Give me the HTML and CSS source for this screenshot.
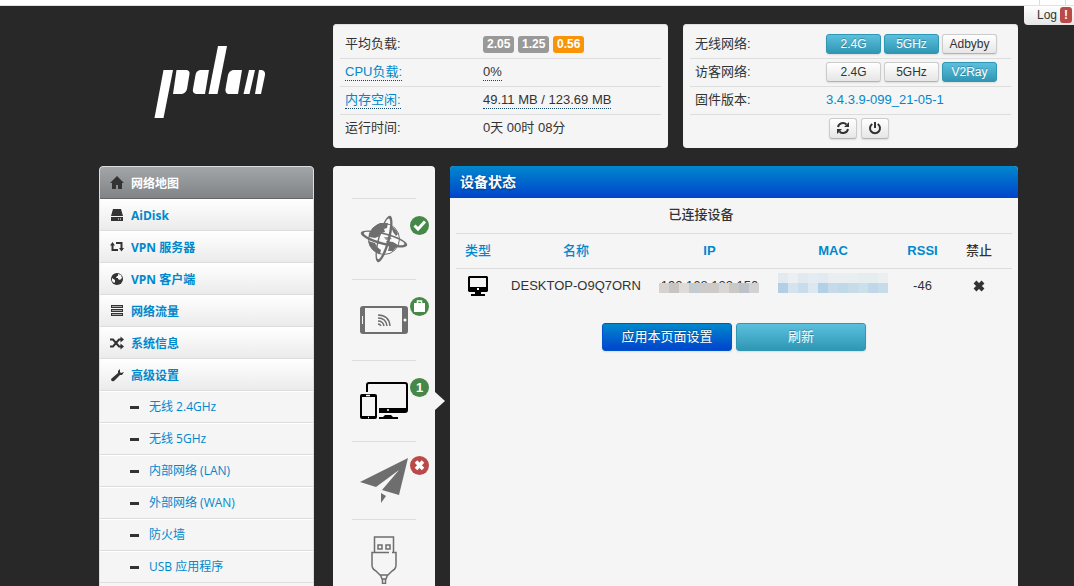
FILE: index.html
```html
<!DOCTYPE html>
<html lang="zh-CN">
<head>
	<meta charset="UTF-8">
	<title>网络地图</title>
	<link rel="stylesheet" href="styles.css">
</head>
<body>
	<div class="topbar"><span></span><span></span></div>
	<a class="log" href="#">Log <span class="log-badge">!</span></a>

	<div class="wrapper">
		<!--头部-->
		<div class="header">
			<a class="logo" href="#" aria-label="Padavan">
				<svg width="112" height="74" viewBox="0 0 112 74" fill="#fff">
					<path d="M9.5 24H19L9.5 72H0.500z"/>
					<path d="M22.500 24H33Q36 25 35.500 28L33 43Q32 47 28 48H19z"/>
					<path d="M46 24H55L51 48H42Q38 47 39 43L41.500 29Q42 25 46 24z"/>
					<path d="M64 0H73L63.500 48H54.500z"/>
					<path d="M79 24H88L84 48H74Q71 47 71.500 43L74 29Q75 25 79 24z"/>
					<path d="M95 24H101L95.500 48H89.500z"/>
					<path d="M105 24H108Q111.500 25 111 29L107 48H101z"/>
				</svg>
			</a>
			<div class="well">
				<table class="info">
					<tr><th>平均负载:</th><td><span class="label">2.05</span> <span class="label">1.25</span> <span class="label label-warning">0.56</span></td></tr>
					<tr><th><a class="dotted" href="#">CPU负载:</a></th><td><span class="dotted">0%</span></td></tr>
					<tr><th><a class="dotted" href="#">内存空闲:</a></th><td><span class="dotted">49.11 MB / 123.69 MB</span></td></tr>
					<tr><th>运行时间:</th><td>0天 00时 08分</td></tr>
				</table>
			</div>
			<div class="well">
				<table class="info info-net">
					<tr><th>无线网络:</th><td><div class="btns"><button class="btn btn-info">2.4G</button><button class="btn btn-info">5GHz</button><button class="btn">Adbyby</button></div></td></tr>
					<tr><th>访客网络:</th><td><div class="btns"><button class="btn">2.4G</button><button class="btn">5GHz</button><button class="btn btn-info">V2Ray</button></div></td></tr>
					<tr><th>固件版本:</th><td><a href="#">3.4.3.9-099_21-05-1</a></td></tr>
					<tr>
						<th></th>
						<td><div class="btns btns-icon">
							<button class="btn" aria-label="刷新"><svg width="14" height="14" viewBox="0 0 14 14"><path d="M2 6a5 5 0 0 1 8.500-2.500M12 8a5 5 0 0 1-8.500 2.500" fill="none" stroke="#333" stroke-width="2"/><path d="M13 1v5H8zM1 13V8h5z" fill="#333"/></svg></button>
							<button class="btn" aria-label="重启"><svg width="14" height="14" viewBox="0 0 14 14"><path d="M4.300 3A5 5 0 1 0 9.700 3M7 1v6" fill="none" stroke="#333" stroke-width="2"/></svg></button>
						</div></td>
					</tr>
				</table>
			</div>
		</div>

		<div class="main">
			<!--左侧菜单-->
			<ul class="menu">
				<li class="active"><a href="#"><svg width="14" height="14" viewBox="0 0 14 14"><path d="M7 0l7 7h-2v6H8V9H6v4H2V7H0z"/></svg>网络地图</a></li>
				<li><a href="#"><svg width="14" height="14" viewBox="0 0 14 14"><path d="M3 1h8l2 7H1zM1 9h12v4H1z"/><path d="M8 11h1M10 11h1" stroke="#fff"/></svg>AiDisk</a></li>
				<li><a href="#"><svg width="14" height="14" viewBox="0 0 14 14"><path d="M2.500 4v6H8M6 3h5.500v5" fill="none" stroke="#333" stroke-width="2"/><path d="M0 5.500L2.500 2 5 5.500zM9 8h5l-2.500 3.500z"/></svg>VPN 服务器</a></li>
				<li><a href="#"><svg width="14" height="14" viewBox="0 0 14 14"><circle cx="7" cy="7" r="6"/><path d="M8 2l3 1 1 3-2 2-2-1 0-1-2 0 1-2 1 0zM2 6l3 2 0 2-1 1-2-2z" fill="#f8f8f8"/></svg>VPN 客户端</a></li>
				<li><a href="#"><svg width="14" height="14" viewBox="0 0 14 14"><path d="M1 1h12v3H1zM1 5h12v3H1zM1 9h12v3H1z"/><path d="M2 2.500h10M2 6.500h10M2 10.500h10" stroke="#aaa"/></svg>网络流量</a></li>
				<li><a href="#"><svg width="14" height="14" viewBox="0 0 14 14"><path d="M0 3.500h3l6 7h2M0 10.500h3l6-7h2" fill="none" stroke="#333" stroke-width="2"/><path d="M10.500 0.500l3.500 3-3.500 3zM10.500 7.500l3.500 3-3.500 3z"/></svg>系统信息</a></li>
				<li><a href="#"><svg width="14" height="14" viewBox="0 0 14 14"><path d="M10 1L8 3v2l-7 6q0 3 3 2l6-6h2l2-3-3 1-1-1z"/></svg>高级设置</a></li>
				<li class="sub"><a href="#">无线 2.4GHz</a></li>
				<li class="sub"><a href="#">无线 5GHz</a></li>
				<li class="sub"><a href="#">内部网络 (LAN)</a></li>
				<li class="sub"><a href="#">外部网络 (WAN)</a></li>
				<li class="sub"><a href="#">防火墙</a></li>
				<li class="sub"><a href="#">USB 应用程序</a></li>
			</ul>

			<!--网络地图图标-->
			<div class="map">
				<a class="map-item" href="#" aria-label="互联网">
					<svg width="48" height="48" viewBox="0 0 48 48">
						<circle cx="24" cy="24" r="15.500" fill="#fafafa" stroke="#6e6e6e"/>
						<path d="M9 20q3-9 11-12l8 0-1 5-3 1 1 3-4 1-1 3-5 2-6-1zM8 26l7 2 2 4 4 3-1 4Q10 36 8 26zM31 11q5 3 7 8l-2 2-3-4zM26 26l7 1 5 3-5 6-5 0 1-4z" fill="#6e6e6e"/>
						<path d="M24 22l6 0 2 2-6 1z" fill="#999"/>
						<g fill="#6e6e6e" fill-rule="evenodd">
							<path transform="rotate(15 24 24)" d="M0 24a24 6 0 1 0 48 0a24 6 0 1 0-48 0M3 23.500a21 4 0 1 0 42 0a21 4 0 1 0-42 0"/>
							<path transform="rotate(-75 24 24)" d="M0 24a24 6 0 1 0 48 0a24 6 0 1 0-48 0M3 23.500a21 4 0 1 0 42 0a21 4 0 1 0-42 0"/>
						</g>
					</svg>
					<span class="badge"><svg width="19" height="19" viewBox="0 0 19 19"><path d="M4.500 9.500l3.500 3.500 7-7.500" fill="none" stroke="#fff" stroke-width="3"/></svg></span>
				</a>
				<a class="map-item" href="#" aria-label="无线">
					<svg width="48" height="48" viewBox="0 0 48 48">
						<rect y="10" width="48" height="28" rx="3" fill="#6e6e6e"/>
						<rect x="5" y="12" width="37" height="24" fill="#f5f5f5"/>
						<path d="M2.500 20v8" stroke="#f5f5f5"/><circle cx="45" cy="24" r="1.500" fill="#fff"/>
						<path d="M18 19q11 0 12 11M18 22q8 0 9 8M18 25q5 0 6 5M18 28q2 0 3 2" fill="none" stroke="#6e6e6e" stroke-width="1.500"/>
					</svg>
					<span class="badge"><svg width="19" height="19" viewBox="0 0 19 19"><path d="M4 6h11v9H4z" fill="#fff"/><path d="M7.500 7V4h4v3" fill="none" stroke="#fff" stroke-width="1.500"/></svg></span>
				</a>
				<a class="map-item current" href="#" aria-label="设备">
					<svg width="48" height="48" viewBox="0 0 48 48">
						<path d="M7 15V8q0-2 2-2h36q2 0 2 2v24" fill="none" stroke="#000" stroke-width="2"/>
						<path d="M19 31h29v2q0 3-3 3H19zM25 38h6l2 2h5v2H19v-2h4z"/>
						<rect y="17" width="17" height="25" rx="2"/><path d="M2 20h13v19H2z" fill="#f5f5f5"/><path d="M6 18.500h4M8 40.500h1M27 33h2" stroke="#fff" stroke-width="1.500"/>
					</svg>
					<span class="badge">1</span>
				</a>
				<a class="map-item map-item-short" href="#" aria-label="打印">
					<svg width="48" height="48" viewBox="0 0 48 48"><path d="M48 0L0 24l16 5L39 12 22 32l17 5zM21 35l5 3-5 7z" fill="#6e6e6e"/></svg>
					<span class="badge badge-important"><svg width="19" height="19" viewBox="0 0 19 19"><path d="M6 5.500l7 7.500M13 5.500L6 13" stroke="#fff" stroke-width="3.500"/></svg></span>
				</a>
				<a class="map-item" href="#" aria-label="USB">
					<svg width="48" height="48" viewBox="0 0 48 48" fill="none" stroke="#6e6e6e" stroke-width="1.500"><path d="M14.500 16.500V1h19v15.500M29 16.500H12V29q0 4 4 6l4 4h8l4-4q4-2 4-6V16.500h-4M18 9h4v4h-4zM26 9h4v4h-4zM20.500 39l1.500 4h4l1.500-4M22.500 43v4.500h3V43"/></svg>
				</a>
			</div>

			<!--设备状态-->
			<div class="panel">
				<h2>设备状态</h2>
				<div class="panel-body">
					<table class="clients">
						<colgroup><col class="c-type"><col class="c-name"><col class="c-ip"><col class="c-mac"><col class="c-rssi"><col class="c-block"></colgroup>
						<thead>
							<tr><th colspan="5">已连接设备</th><th></th></tr>
							<tr><th><a href="#">类型</a></th><th><a href="#">名称</a></th><th class="latin"><a href="#">IP</a></th><th class="latin"><a href="#">MAC</a></th><th class="latin"><a href="#">RSSI</a></th><th>禁止</th></tr>
						</thead>
						<tbody>
							<tr>
								<td><svg width="20" height="20" viewBox="0 0 20 20"><path d="M1 0h18l1 1v14l-1 1h-6v2h4v2H3v-2h4v-2H1l-1-1V1z"/><path d="M2 2h16v9H2z" fill="#f5f5f5"/><path d="M9 13h2" stroke="#fff" stroke-width="2"/></svg></td>
								<td>DESKTOP-O9Q7ORN</td>
								<td><span class="masked">192.168.123.150<i class="mosaic-ip"></i></span></td>
								<td><i class="mosaic-mac"></i></td>
								<td>-46</td>
								<td><svg width="12" height="12" viewBox="0 0 12 12"><path d="M2 2l8 8M10 2l-8 8" stroke="#333" stroke-width="4"/></svg></td>
							</tr>
						</tbody>
					</table>
					<div class="actions">
						<button class="btn btn-primary">应用本页面设置</button>
						<button class="btn btn-info">刷新</button>
					</div>
				</div>
			</div>
		</div>
	</div>
</body>
</html>
```
FILE: styles.css
```css
*{
	box-sizing: border-box;
}
html{
	height: 100%;
}
body{
	margin: 0;
	height: 100%;
	display: flex;
	flex-direction: column;
	overflow: hidden;
	position: relative;
	background: #282828;
	color: #333;
	font: 13px/18px "Liberation Sans", "Noto Sans CJK SC", sans-serif;
}
a{
	color: #08c;
	text-decoration: none;
}
svg{
	display: block;
}
.topbar{
	flex: none;
	height: 6px;
	background: #fff;
	border-bottom: 1px solid #dde3dd;
	display: flex;
	justify-content: flex-end;
	gap: 25px;
	padding-right: 8px;
}
.topbar span{
	width: 1px;
	background: #ddd;
}
.log{
	position: absolute;
	top: 6px;
	right: 0;
	height: 19px;
	padding: 0 2px 0 13px;
	display: flex;
	gap: 3px;
	background: linear-gradient(#fff, #e6e6e6);
	border-radius: 0 0 0 4px;
	color: #333;
	font-size: 12px;
}
.log-badge{
	width: 12px;
	height: 16px;
	margin-top: 1px;
	border-radius: 3px;
	background: #b94a48;
	color: #fff;
	font-weight: bold;
	line-height: 16px;
	text-align: center;
}
.wrapper{
	flex: 1;
	min-height: 0;
	width: 100%;
	max-width: 962px;
	margin: 0 auto;
	padding: 18px 0 0 44px;
	display: flex;
	flex-direction: column;
	gap: 18px;
}
/*头部*/
.header{
	display: grid;
	grid-template-columns: 218px 1fr 1fr;
	gap: 15px;
}
.logo{
	padding: 22px 0 0 54px;
}
.well{
	padding: 6px 7px;
	border-radius: 4px;
	background: #f5f5f5;
	box-shadow: inset 0 1px 1px #ddd;
}
.info{
	width: 100%;
	border-collapse: collapse;
}
.info th,.info td{
	height: 28px;
	padding: 0 5px;
	text-align: left;
	font-weight: normal;
}
.info th{
	width: 138px;
}
.info-net th{
	width: 131px;
}
.info tr + tr{
	border-top: 1px solid #ddd;
}
.label{
	display: inline-block;
	padding: 0 4px;
	border-radius: 3px;
	background: #999;
	color: #fff;
	font-size: 12px;
	font-weight: bold;
	line-height: 17px;
}
.label-warning{
	background: #f89406;
}
.dotted{
	display: inline-block;
	line-height: 16px;
	border-bottom: 1px dotted #146;
}
.btn{
	height: 20px;
	padding: 0;
	border: 1px solid #ccc;
	border-bottom-color: #b3b3b3;
	border-radius: 3px;
	background: linear-gradient(#fff, #e6e6e6);
	box-shadow: 0 1px 2px rgba(0,0,0,0.1);
	color: #333;
	font: inherit;
	font-size: 12px;
	line-height: 18px;
	cursor: pointer;
}
.btn-info{
	border-color: #2f96b4;
	background: linear-gradient(#5bc0de, #2f96b4);
	color: #fff;
	text-shadow: 0 -1px 0 rgba(0,0,0,0.25);
}
.btn-primary{
	border-color: #0055cc;
	background: linear-gradient(#08c, #0044cc);
	color: #fff;
	text-shadow: 0 -1px 0 rgba(0,0,0,0.25);
}
.btns{
	display: flex;
	gap: 3px;
}
.btns .btn{
	width: 55px;
}
.btns-icon{
	gap: 4px;
	padding-left: 3px;
}
.btns-icon .btn{
	width: 28px;
	height: 21px;
	display: flex;
	align-items: center;
	justify-content: center;
}
/*主体*/
.main{
	flex: 1;
	min-height: 0;
	display: grid;
	grid-template-columns: 218px 102px 1fr;
	column-gap: 15px;
}
.menu{
	margin: 0 4px 0 -1px;
	padding: 0;
	list-style: none;
	overflow: hidden;
	border: 1px solid #ddd;
	border-radius: 4px 4px 0 0;
	background: #f5f5f5;
	font-family: "Open Sans", "Noto Sans CJK SC", sans-serif;
	font-size: 12px;
	font-weight: bold;
}
.menu a{
	height: 32px;
	padding: 2px 0 0 10px;
	display: flex;
	align-items: center;
	gap: 7px;
	border-bottom: 1px solid #ddd;
	background: linear-gradient(#fff, #ebebeb);
}
.menu svg{
	margin-bottom: 2px;
	fill: #333;
}
.menu .active a{
	background: linear-gradient(#a3a6a9, #818487);
	border-bottom-color: #666;
	color: #fff;
}
.menu .sub a{
	padding: 0 0 0 30px;
	gap: 10px;
	background: #f5f5f5;
	border-top: 1px solid #fff;
	font-weight: normal;
}
.menu .sub a::before{
	content: "";
	width: 9px;
	height: 3px;
	background: #333;
}
.map{
	padding: 32px 19px 0;
	border-radius: 4px 4px 0 0;
	background: #f5f5f5;
}
.map-item{
	position: relative;
	height: 81px;
	padding: 16px 8px;
	display: block;
	border-top: 1px solid #ddd;
}
.map-item-short{
	height: 78px;
}
.badge{
	position: absolute;
	top: 17px;
	right: -13px;
	width: 19px;
	height: 19px;
	border-radius: 50%;
	background: #468847;
	color: #fff;
	font-weight: bold;
	line-height: 19px;
	text-align: center;
}
.badge-important{
	top: 14px;
	background: #b94a48;
}
.current::after{
	content: "";
	position: absolute;
	top: 31px;
	right: -29px;
	border: 9px solid transparent;
	border-left: 10px solid #f5f5f5;
	border-right: 0;
}
.panel{
	border-radius: 4px 4px 0 0;
	background: #f5f5f5;
	overflow: hidden;
}
.panel h2{
	margin: 0;
	padding-left: 10px;
	background: linear-gradient(#08c, #04c);
	color: #fff;
	font-size: 14px;
	line-height: 32px;
	text-shadow: 0 1px 2px rgba(0,0,0,0.4);
}
.panel-body{
	padding: 0 6px;
}
.clients{
	width: 100%;
	table-layout: fixed;
	border-collapse: collapse;
}
.clients th,.clients td{
	height: 35px;
	padding: 0;
	text-align: center;
}
.clients th{
	border-bottom: 1px solid #ddd;
	font-weight: 500;
}
.clients .latin{
	font-weight: bold;
}
.clients td svg{
	margin: 0 auto;
}
.c-type{
	width: 44px;
}
.c-name{
	width: 152px;
}
.c-ip{
	width: 115px;
}
.c-mac{
	width: 132px;
}
.c-rssi{
	width: 47px;
}
.masked{
	position: relative;
}
.mosaic-ip{
	position: absolute;
	left: -2px;
	right: -1px;
	bottom: 0;
	height: 10px;
	background: linear-gradient(90deg, #d6d2cf 10%, #c6c5c3 0 20%, #e0dbd7 0 30%, #c4ccd0 0 40%, #cccbca 0 60%, #d9d7d3 0 70%, #cbc9c6 0 80%, #bdc2ca 0 90%, #d1d3d0 0);
}
.mosaic-mac{
	display: block;
	width: 110px;
	height: 20px;
	margin: 0 auto 6px;
	background:
		linear-gradient(90deg, #e1eaf1 10px, #ebeff2 0 20px, #e1e9ef 0 30px, #e4ecf3 0 40px, #e0eaf0 0 50px, #e9eef1 0 80px, #e5edef 0 100px, #ebeff2 0) top / 100% 10px no-repeat,
		linear-gradient(90deg, #b3cfe5 10px, #d5e3ed 0 20px, #c7dcec 0 30px, #dce7ef 0 40px, #b0d1e6 0 50px, #c7dae9 0 60px, #bfd9e8 0 70px, #c7dce9 0 80px, #cce0ea 0 90px, #bfd7e8 0 100px, #c6dcea 0) bottom / 100% 10px no-repeat;
}
.actions{
	padding-top: 20px;
	display: flex;
	justify-content: center;
	gap: 4px;
}
.actions .btn{
	width: 130px;
	height: 28px;
	font-size: 13px;
}
```
